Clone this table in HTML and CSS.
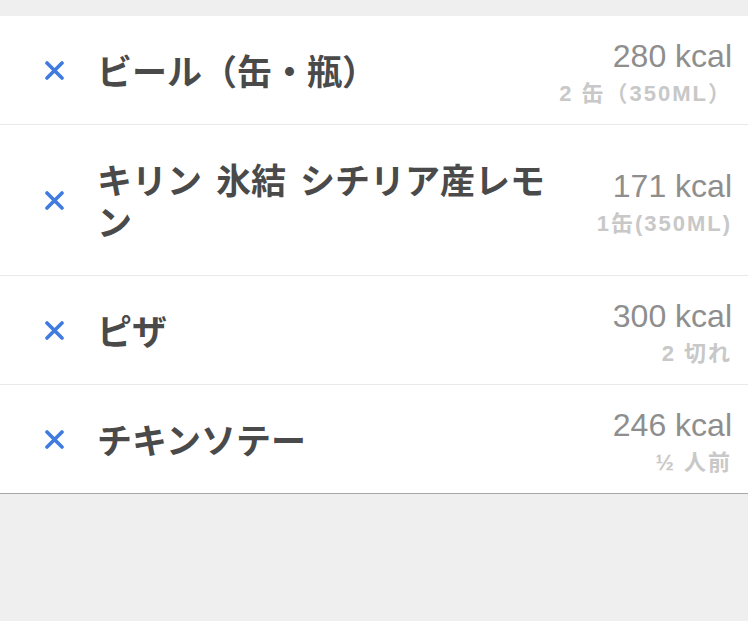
FILE: index.html
```html
<!DOCTYPE html>
<html lang="ja">
<head>
    <meta charset="UTF-8">
    <meta name="viewport" content="width=device-width, initial-scale=1.0">
    <title>今日の記録</title>
    <link rel="stylesheet" href="styles.css">
</head>
<body>
    <ul class="food-list">
        <li class="food-item">
            <button class="remove" aria-label="削除">
                <svg viewBox="0 0 19 19" width="19" height="19"><path d="M2 2 L17 17 M17 2 L2 17"/></svg>
            </button>
            <div class="name">ビール（缶・瓶）</div>
            <div class="meta">
                <div class="kcal">280 kcal</div>
                <div class="amount">2 缶（350ML）</div>
            </div>
        </li>
        <li class="food-item">
            <button class="remove" aria-label="削除">
                <svg viewBox="0 0 19 19" width="19" height="19"><path d="M2 2 L17 17 M17 2 L2 17"/></svg>
            </button>
            <div class="name">キリン 氷結 シチリア産レモン</div>
            <div class="meta">
                <div class="kcal">171 kcal</div>
                <div class="amount">1缶(350ML)</div>
            </div>
        </li>
        <li class="food-item">
            <button class="remove" aria-label="削除">
                <svg viewBox="0 0 19 19" width="19" height="19"><path d="M2 2 L17 17 M17 2 L2 17"/></svg>
            </button>
            <div class="name">ピザ</div>
            <div class="meta">
                <div class="kcal">300 kcal</div>
                <div class="amount">2 切れ</div>
            </div>
        </li>
        <li class="food-item">
            <button class="remove" aria-label="削除">
                <svg viewBox="0 0 19 19" width="19" height="19"><path d="M2 2 L17 17 M17 2 L2 17"/></svg>
            </button>
            <div class="name">チキンソテー</div>
            <div class="meta">
                <div class="kcal">246 kcal</div>
                <div class="amount">½ 人前</div>
            </div>
        </li>
    </ul>
</body>
</html>
```

FILE: styles.css
```css
body {
    margin: 0;
    padding: 16px 0 0;
    background-color: #efefef;
    font-family: "Liberation Sans", "Noto Sans CJK JP", sans-serif;
}
.food-list {
    list-style: none;
    margin: 0;
    padding: 0;
    background: #fff;
    border-bottom: 1px solid #a8a8a8;
    box-shadow: 0 1px 1px rgba(0, 0, 0, 0.18);
}
.food-item {
    display: flex;
    align-items: center;
    gap: 25px;
    padding: 20px 16px 20px 45px;
    border-bottom: 1px solid #e9e9e9;
}
.food-item:last-child {
    border-bottom: none;
}
.remove {
    display: flex;
    padding: 0;
    margin-right: 8px;
    border: none;
    background: none;
    cursor: pointer;
}
.remove svg {
    stroke: #3f7be0;
    stroke-width: 3.6;
    stroke-linecap: round;
    fill: none;
}
.name {
    flex: 1;
    margin: 13px 0;
    font-family: "Noto Sans CJK JP", sans-serif;
    font-weight: 700;
    font-size: 35px;
    line-height: 42px;
    word-spacing: 6px;
    color: #4a4a4a;
}
.meta {
    min-width: 150px;
    flex-shrink: 0;
    margin: 2px 0 -2px;
    text-align: right;
    white-space: nowrap;
}
.kcal {
    font-size: 32px;
    line-height: 36px;
    color: #8e8e8e;
}
.amount {
    margin-top: 8px;
    font-size: 22px;
    line-height: 24px;
    font-weight: 700;
    letter-spacing: 2px;
    text-transform: uppercase;
    color: #c8c8c8;
}
```
